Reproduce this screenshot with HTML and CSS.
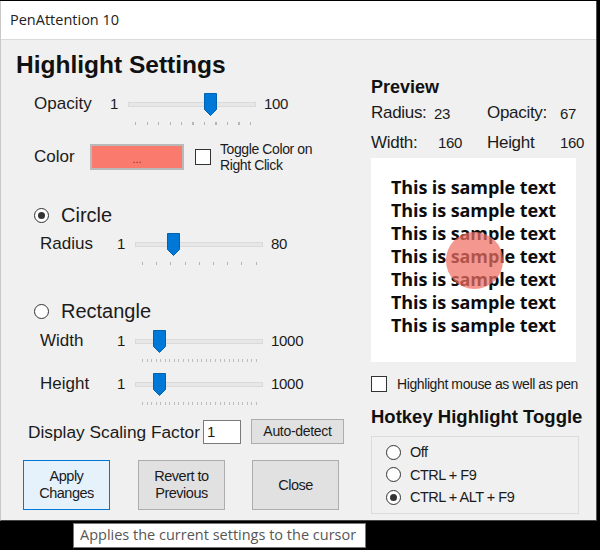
FILE: index.html
```html
<!DOCTYPE html>
<html>
<head>
<meta charset="utf-8">
<link rel="stylesheet" href="styles.css">
</head>
<body>
<div class="screen">
  <div class="window">
    <div class="titlebar">PenAttention 10</div>
    <div class="content">
      <div class="left">
        <h1 class="heading">Highlight Settings</h1>

        <div class="srow srow-op">
          <span class="slbl">Opacity</span>
          <span class="smin">1</span>
          <div class="swrap">
            <div class="track"></div>
            <div class="ticks ticks-op"></div>
            <svg class="thumb" style="left:76px" width="13" height="23" viewBox="0 0 13 23"><path d="M0.5 0.5H12.5V16.5L6.5 22.5L0.5 16.5Z" fill="#0078d7" stroke="#0063b1" stroke-width="1"/></svg>
          </div>
          <span class="smax">100</span>
        </div>

        <div class="colorrow">
          <span class="clbl">Color</span>
          <div class="swatch"><span>...</span></div>
          <span class="checkbox"></span>
          <span class="toggletext">Toggle Color on<br>Right Click</span>
        </div>

        <div class="radiorow radio-circle">
          <span class="radio checked"></span>
          <span class="rlabel">Circle</span>
        </div>

        <div class="srow srow-sub srow-rad">
          <span class="slbl">Radius</span>
          <span class="smin">1</span>
          <div class="swrap">
            <div class="track"></div>
            <div class="ticks ticks-rad"></div>
            <svg class="thumb" style="left:32px" width="13" height="23" viewBox="0 0 13 23"><path d="M0.5 0.5H12.5V16.5L6.5 22.5L0.5 16.5Z" fill="#0078d7" stroke="#0063b1" stroke-width="1"/></svg>
          </div>
          <span class="smax">80</span>
        </div>

        <div class="radiorow radio-rect">
          <span class="radio"></span>
          <span class="rlabel">Rectangle</span>
        </div>

        <div class="srow srow-sub srow-w">
          <span class="slbl">Width</span>
          <span class="smin">1</span>
          <div class="swrap">
            <div class="track"></div>
            <div class="ticks ticks-dense"></div>
            <svg class="thumb" style="left:18px" width="13" height="23" viewBox="0 0 13 23"><path d="M0.5 0.5H12.5V16.5L6.5 22.5L0.5 16.5Z" fill="#0078d7" stroke="#0063b1" stroke-width="1"/></svg>
          </div>
          <span class="smax">1000</span>
        </div>

        <div class="srow srow-sub srow-h">
          <span class="slbl">Height</span>
          <span class="smin">1</span>
          <div class="swrap">
            <div class="track"></div>
            <div class="ticks ticks-dense"></div>
            <svg class="thumb" style="left:18px" width="13" height="23" viewBox="0 0 13 23"><path d="M0.5 0.5H12.5V16.5L6.5 22.5L0.5 16.5Z" fill="#0078d7" stroke="#0063b1" stroke-width="1"/></svg>
          </div>
          <span class="smax">1000</span>
        </div>

        <div class="scalerow">
          <span class="scalelbl">Display Scaling Factor</span>
          <span class="scaleinput">1</span>
          <span class="btn autobtn">Auto-detect</span>
        </div>

        <div class="btnrow">
          <span class="btn bigbtn primary">Apply<br>Changes</span>
          <span class="btn bigbtn">Revert to<br>Previous</span>
          <span class="btn bigbtn">Close</span>
        </div>
      </div>

      <div class="right">
        <div class="ptitle">Preview</div>
        <div class="stats">
          <span class="stl">Radius:</span><span class="stv">23</span>
          <span class="stl">Opacity:</span><span class="stv">67</span>
        </div>
        <div class="stats stats2">
          <span class="stl">Width:</span><span class="stv stv-w">160</span>
          <span class="stl">Height</span><span class="stv">160</span>
        </div>
        <div class="previewbox">
          <div class="sample">This is sample text</div>
          <div class="sample">This is sample text</div>
          <div class="sample">This is sample text</div>
          <div class="sample">This is sample text</div>
          <div class="sample">This is sample text</div>
          <div class="sample">This is sample text</div>
          <div class="sample">This is sample text</div>
          <div class="spot"></div>
        </div>
        <div class="mouserow">
          <span class="checkbox"></span>
          <span class="mousetext">Highlight mouse as well as pen</span>
        </div>
        <div class="hktitle">Hotkey Highlight Toggle</div>
        <div class="group">
          <div class="grow"><span class="radio small"></span><span class="gtext">Off</span></div>
          <div class="grow"><span class="radio small"></span><span class="gtext">CTRL + F9</span></div>
          <div class="grow"><span class="radio small checked"></span><span class="gtext">CTRL + ALT + F9</span></div>
        </div>
      </div>
    </div>
  </div>
  <div class="tooltip">Applies the current settings to the cursor</div>
</div>
</body>
</html>
```

FILE: styles.css
```css
* { box-sizing: border-box; }
html, body { margin: 0; padding: 0; }
body {
  background: #000;
  width: 600px;
  height: 550px;
  overflow: hidden;
  font-family: "Liberation Sans", Arial, sans-serif;
  color: #1b1b1b;
}
.screen { position: relative; width: 600px; height: 550px; padding-top: 1px; }
.window {
  width: 597px;
  height: 520px;
  background: #f0f0f0;
  border-left: 1px solid #c8c8c8;
  border-right: 1px solid #555;
  border-bottom: 1px solid #444;
}
.titlebar {
  height: 39px;
  background: #fff;
  border-bottom: 1px solid #dadada;
  font-family: "Open Sans", "Noto Sans", sans-serif;
  font-size: 14.5px;
  color: #222;
  line-height: 38px;
  padding-left: 9px;
}
.content {
  display: grid;
  grid-template-columns: 354px 1fr;
}
.left { padding-left: 15px; padding-top: 10px; }
.heading {
  margin: 0;
  font-size: 24.5px;
  font-weight: bold;
  line-height: 30px;
  height: 30px;
  color: #111;
}

/* sliders */
.srow {
  display: flex;
  align-items: flex-start;
  height: 36px;
  font-size: 17px;
}
.srow-op { margin-top: 12px; padding-left: 18px; }
.srow-sub { padding-left: 24px; }
.srow-rad { margin-top: 5px; }
.srow-w { margin-top: 6px; }
.srow-h { margin-top: 7px; }
.slbl { width: 76px; line-height: 24px; }
.srow-sub .slbl { width: 77px; }
.smin { width: 18px; line-height: 24px; font-size: 15px; }
.smax { margin-left: 8px; line-height: 24px; font-size: 15px; letter-spacing: -0.3px; }
.swrap { position: relative; width: 128px; height: 36px; }
.track {
  height: 5px;
  margin-top: 10px;
  background: #e7e7e7;
  border: 1px solid #dadada;
}
.ticks {
  height: 3px;
  margin-top: 15px;
  margin-left: 7px;
}
.ticks-op {
  width: 116px;
  background: repeating-linear-gradient(to right, #b4b4b4 0 1px, transparent 1px 11.5px);
}
.ticks-rad {
  width: 115px;
  background: repeating-linear-gradient(to right, #b4b4b4 0 1px, transparent 1px 14.2px);
}
.ticks-dense {
  width: 115px;
  background: repeating-linear-gradient(to right, #bdbdbd 0 1px, transparent 1px 4.56px);
}
.thumb { position: absolute; top: 1px; }

/* color row */
.colorrow {
  display: flex;
  align-items: center;
  height: 26px;
  margin-top: 16px;
  padding-left: 18px;
}
.clbl { width: 56px; font-size: 17px; }
.swatch {
  width: 94px;
  height: 26px;
  border: 2px solid #b9b9b9;
  background: #fa7b6e;
  display: flex;
  align-items: center;
  justify-content: center;
  font-size: 11px;
  color: #8a2a20;
  padding-top: 4px;
}
.checkbox {
  display: inline-block;
  width: 16px;
  height: 16px;
  border: 1px solid #333;
  background: #fff;
  flex: none;
}
.colorrow .checkbox { margin-left: 11px; }
.toggletext {
  margin-left: 9px;
  font-size: 14px;
  line-height: 16px;
  letter-spacing: -0.4px;
}

/* radios */
.radiorow { display: flex; align-items: center; height: 24px; padding-left: 18px; }
.radio-circle { margin-top: 33px; }
.radio-rect { margin-top: 31px; }
.radio {
  width: 15px;
  height: 15px;
  border: 1px solid #333;
  border-radius: 50%;
  background: #fff;
  position: relative;
  flex: none;
}
.radio.checked::after {
  content: "";
  position: absolute;
  left: 3px; top: 3px;
  width: 7px; height: 7px;
  border-radius: 50%;
  background: #333;
}
.rlabel { margin-left: 12px; font-size: 20px; }

/* scaling */
.scalerow {
  display: flex;
  align-items: center;
  height: 26px;
  margin-top: 11px;
  padding-left: 12px;
}
.scalelbl { font-size: 17.3px; width: 175px; white-space: nowrap; }
.scaleinput {
  width: 38px;
  height: 24px;
  border: 1px solid #7a7a7a;
  background: #fff;
  font-size: 15px;
  line-height: 22px;
  padding-left: 3px;
}
.btn {
  display: inline-flex;
  align-items: center;
  justify-content: center;
  text-align: center;
  background: #e1e1e1;
  border: 1px solid #adadad;
  font-size: 14px;
  letter-spacing: -0.3px;
  color: #1b1b1b;
}
.autobtn { width: 93px; height: 25px; margin-left: 10px; margin-top: -2px; }

.btnrow {
  display: flex;
  margin-top: 15px;
  padding-left: 7px;
  gap: 28px;
}
.bigbtn { width: 87px; height: 50px; line-height: 17px; font-size: 14.5px; letter-spacing: -0.5px; }
.btnrow .bigbtn:nth-child(3) { margin-left: -1px; }
.primary { background: #e5f1fb; border: 1px solid #0078d7; }

/* right column */
.right { padding-left: 16px; }
.ptitle {
  margin-top: 36px;
  font-size: 18px;
  font-weight: bold;
  line-height: 22px;
  color: #111;
}
.stats {
  display: grid;
  grid-template-columns: 63px 53px 73px auto;
  height: 28px;
  align-items: center;
  margin-top: 1px;
}
.stats2 { height: 29px; }
.stl { font-size: 17px; letter-spacing: -0.3px; }
.stv { font-size: 15px; letter-spacing: -0.3px; }
.stv-w { padding-left: 4px; }
.previewbox {
  position: relative;
  width: 205px;
  height: 204px;
  margin-top: 1px;
  background: #fff;
  padding-top: 18px;
  padding-left: 20px;
  overflow: hidden;
}
.sample {
  font-family: "Open Sans", "Noto Sans", sans-serif;
  font-weight: bold;
  font-size: 18px;
  line-height: 23px;
  height: 23px;
  color: #0d0d0d;
  white-space: nowrap;
  letter-spacing: -0.1px;
}
.spot {
  position: absolute;
  left: 75px;
  top: 74px;
  width: 57px;
  height: 57px;
  border-radius: 50%;
  background: rgba(240, 112, 100, 0.72);
}
.mouserow {
  display: flex;
  align-items: center;
  height: 20px;
  margin-top: 12px;
}
.mousetext { margin-left: 10px; font-size: 14px; letter-spacing: -0.4px; }
.hktitle {
  margin-top: 11px;
  font-size: 18.5px;
  font-weight: bold;
  line-height: 24px;
  color: #111;
}
.group {
  margin-top: 7px;
  width: 208px;
  height: 78px;
  border: 1px solid #dcdcdc;
  padding-top: 4px;
  padding-left: 14px;
}
.grow { display: flex; align-items: center; height: 22.5px; }
.radio.small { width: 15px; height: 15px; }
.gtext { margin-left: 9px; font-size: 14.5px; letter-spacing: -0.5px; }

/* tooltip */
.tooltip {
  position: absolute;
  left: 73px;
  top: 523px;
  width: 293px;
  height: 25px;
  background: #fff;
  border: 1px solid #767676;
  font-family: "Open Sans", "Noto Sans", sans-serif;
  font-size: 14.5px;
  line-height: 22px;
  color: #575757;
  padding-left: 6px;
  white-space: nowrap;
}
```
